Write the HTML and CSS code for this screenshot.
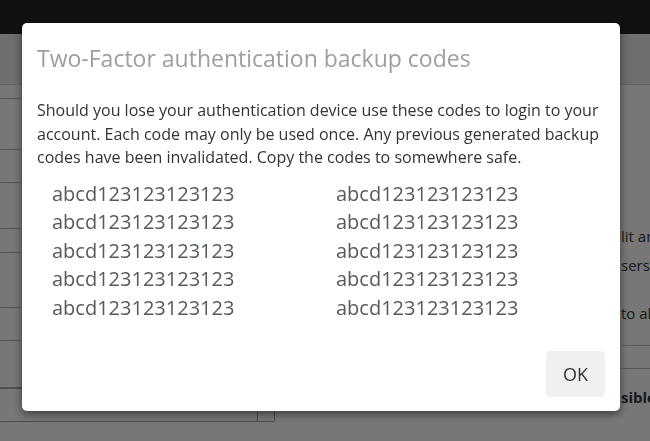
FILE: index.html
```html
<!DOCTYPE html>
<html lang="en">
<head>
    <meta charset="UTF-8">
    <meta name="viewport" content="width=device-width, initial-scale=1.0">
    <title>Account settings</title>
    <link rel="stylesheet" href="styles.css">
</head>
<body>
    <div class="navbar"></div>
    <div class="subheader"></div>
    <div class="page">
        <div class="side-list">
            <div class="row r1"></div>
            <div class="row r2"></div>
            <div class="row r3"></div>
            <div class="row r4"></div>
            <div class="row r5"></div>
            <div class="row r6"></div>
            <div class="row r7"></div>
            <div class="row r8"></div>
            <div class="fake-select"><span class="caret"></span></div>
        </div>
        <div class="content">
            <p class="para p1">lit an</p>
            <p class="para p2">sers,</p>
            <p class="para p3">to all</p>
            <div class="divider d1"></div>
            <div class="divider d2"></div>
            <p class="para p4"><strong>sible</strong></p>
        </div>
    </div>

    <div class="backdrop">
        <div class="modal">
            <div class="modal-header">
                <h4 class="modal-title">Two-Factor authentication backup codes</h4>
            </div>
            <div class="modal-body">
                <p>Should you lose your authentication device use these codes to login to your account. Each code may only be used once. Any previous generated backup codes have been invalidated. Copy the codes to somewhere safe.</p>
                <div class="codes">
                    <div class="code-col">
                        <div class="code">abcd123123123123</div>
                        <div class="code">abcd123123123123</div>
                        <div class="code">abcd123123123123</div>
                        <div class="code">abcd123123123123</div>
                        <div class="code">abcd123123123123</div>
                    </div>
                    <div class="code-col">
                        <div class="code">abcd123123123123</div>
                        <div class="code">abcd123123123123</div>
                        <div class="code">abcd123123123123</div>
                        <div class="code">abcd123123123123</div>
                        <div class="code">abcd123123123123</div>
                    </div>
                </div>
            </div>
            <div class="modal-footer">
                <button class="btn">OK</button>
            </div>
        </div>
    </div>
</body>
</html>
```

FILE: styles.css
```css
html, body {
    height: 100%;
}
body {
    margin: 0;
    font-family: "Open Sans", "Liberation Sans", sans-serif;
    background: #eeeeee;
    color: #333;
    overflow: hidden;
}
.navbar {
    height: 34px;
    background: #1f2327;
}
.subheader {
    height: 50px;
    background: #dadcde;
    border-bottom: 1px solid #c8c8c8;
}
.page {
    display: flex;
}
.side-list {
    width: 275px;
}
.row {
    border-bottom: 1px solid #a4a9ae;
}
.r1 { height: 13px; }
.r2 { height: 50px; }
.r3 { height: 32px; }
.r4 { height: 45px; }
.r5 { height: 23px; }
.r6 { height: 54px; }
.r7 { height: 32px; }
.r8 { height: 46px; }
.fake-select {
    height: 32px;
    border: 1px solid #9a9a9a;
    border-left: none;
    border-radius: 0 2px 2px 0;
    position: relative;
}
.caret {
    position: absolute;
    right: 0;
    top: 0;
    bottom: 0;
    width: 16px;
    border-left: 1px solid #9a9a9a;
}
.content {
    margin-left: auto;
    width: 29px;
    overflow: hidden;
    padding-top: 141px;
    font-size: 15px;
    color: #333;
}
.para {
    margin: 0;
    line-height: 20px;
    white-space: nowrap;
}
.p1 { height: 29px; }
.p2 { height: 48px; }
.p3 { margin-bottom: 22px; }
.divider {
    border-top: 1px solid #b4b4b4;
}
.d1 { height: 22px; }
.d2 { height: 18px; }

.backdrop {
    position: fixed;
    inset: 0;
    background: rgba(0, 0, 0, 0.5);
    padding: 23px 0 0 22px;
}
.modal {
    width: 598px;
    height: 388px;
    background: #fff;
    border-radius: 5px;
    box-shadow: 0 3px 9px rgba(0, 0, 0, 0.5);
    display: flex;
    flex-direction: column;
}
.modal-header {
    padding: 18px 15px 0;
}
.modal-title {
    margin: 0;
    font-size: 23px;
    font-weight: normal;
    color: #9e9e9e;
    line-height: 34px;
}
.modal-body {
    padding: 24px 15px 0;
    flex: 1;
}
.modal-body p {
    margin: 0 0 10px;
    font-size: 16px;
    line-height: 23.5px;
    color: #333;
}
.codes {
    display: flex;
}
.code-col {
    flex: 1;
    padding: 0 15px;
}
.code {
    font-size: 20px;
    line-height: 28.5px;
    color: #555a60;
}
.modal-footer {
    display: flex;
    justify-content: flex-end;
    padding: 0 15px 14px;
}
.btn {
    width: 59px;
    height: 46px;
    background: #f0f0f0;
    border: none;
    border-radius: 4px;
    font-family: inherit;
    font-size: 18px;
    color: #333;
}
```
